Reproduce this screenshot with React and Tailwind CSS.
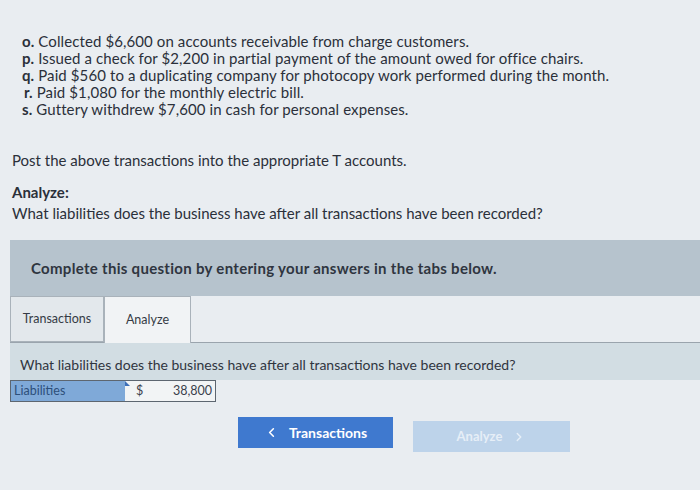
import { ChevronLeft, ChevronRight } from 'lucide-react'

const items = [
  ['o.', 'Collected $6,600 on accounts receivable from charge customers.'],
  ['p.', 'Issued a check for $2,200 in partial payment of the amount owed for office chairs.'],
  ['q.', 'Paid $560 to a duplicating company for photocopy work performed during the month.'],
  ['r.', 'Paid $1,080 for the monthly electric bill.'],
  ['s.', 'Guttery withdrew $7,600 in cash for personal expenses.'],
]

const App = () => {
  return (
    <div className="h-[490px] w-[700px] overflow-hidden bg-[#e9edf1] text-[#2b303a]" style={{ fontFamily: 'Lato, "Open Sans", sans-serif' }}>
      <div className="pl-[22px] pt-[33px] text-[15px] leading-[17px] tracking-[0.1px]">
        {items.map(([k, t]) => (
          <div key={k} className={k === 'r.' ? 'pl-[2px]' : ''}>
            <span className="font-bold">{k}</span> {t}
          </div>
        ))}
      </div>

      <p className="mt-[33px] pl-[12px] text-[15px] leading-[18px]">Post the above transactions into the appropriate T accounts.</p>

      <div className="mt-[14px] pl-[12px] text-[15px] leading-[18px]">
        <div className="font-bold">Analyze:</div>
        <div className="mt-[3px]">What liabilities does the business have after all transactions have been recorded?</div>
      </div>

      <div className="ml-[10px] mt-[18px] flex h-[56px] items-center bg-[#b6c3cd] pl-[21px]">
        <span className="text-[15px] font-bold tracking-[0.3px] text-[#2f3540]">Complete this question by entering your answers in the tabs below.</span>
      </div>

      <div className="ml-[10px] flex h-[47px] items-stretch border-b border-[#9aa4ad]">
        <div className="flex w-[94px] items-center justify-center border border-[#a9b2ba] bg-[#e3e8ec] text-[12.5px] text-[#353b45]">Transactions</div>
        <div className="-mb-px flex w-[87px] items-center justify-center border border-b-0 border-[#a9b2ba] bg-[#f1f3f5] text-[12.5px] text-[#353b45]">Analyze</div>
      </div>

      <div className="ml-[10px] flex h-[37px] items-center bg-[#d2dde3] pl-[10px] pt-[6px] text-[14px] text-[#30353f]">
        What liabilities does the business have after all transactions have been recorded?
      </div>

      <div className="ml-[10px] flex h-[22px] w-[206px] border border-[#5d6670]">
        <div className="flex w-[114px] items-center bg-[#7fa9d8] pl-[3px] text-[12.5px] text-[#2d4f7a]">Liabilities</div>
        <div className="relative flex flex-1 items-center justify-between bg-[#f2f4f5] pl-[11px] pr-[3px] text-[12.5px] text-[#3b414b]">
          <span className="absolute left-0 top-0 h-0 w-0 border-l-[5px] border-t-[5px] border-l-[#3d6fb8] border-t-transparent" />
          <span>$</span>
          <span>38,800</span>
        </div>
      </div>

      <div className="mt-[15px] flex gap-[20px] pl-[238px]">
        <div className="flex h-[31px] w-[155px] items-center justify-center gap-[10px] bg-[#3f79cf] text-[14px] font-bold text-white">
          <ChevronLeft size={15} strokeWidth={2.5} />
          <span>Transactions</span>
        </div>
        <div className="mt-[4px] flex h-[31px] w-[157px] items-center justify-center gap-[10px] bg-[#bdd3ea] text-[13px] font-bold text-[#e6eef7]">
          <span>Analyze</span>
          <ChevronRight size={14} strokeWidth={2.5} />
        </div>
      </div>
    </div>
  )
}

export default App
